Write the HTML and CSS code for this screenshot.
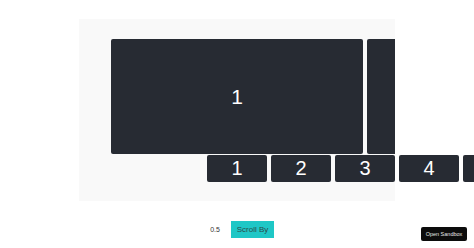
FILE: index.html
```html
<!DOCTYPE html>
<html>
<head>
<meta charset="utf-8">
<link rel="stylesheet" href="styles.css">
</head>
<body>
<div class="stage">
  <div class="viewport">
    <div class="track">
      <div class="slide">1</div>
      <div class="slide">2</div>
      <div class="slide">3</div>
    </div>
  </div>
  <div class="thumbs">
    <div class="thumb">1</div>
    <div class="thumb">2</div>
    <div class="thumb">3</div>
    <div class="thumb">4</div>
    <div class="thumb">5</div>
  </div>
</div>
<div class="controls">
  <input class="amount" type="text" value="0.5">
  <button class="scroll-btn">Scroll By</button>
</div>
<button class="sandbox">Open Sandbox</button>
</body>
</html>
```
FILE: styles.css
```css
html, body {
  margin: 0;
  padding: 0;
  background: #fff;
  font-family: "Liberation Sans", Arial, sans-serif;
  overflow: hidden;
  width: 474px;
  height: 248px;
}
.stage {
  margin: 19px 0 0 79px;
  width: 316px;
  height: 182px;
  box-sizing: border-box;
  padding: 20px 0 0 32px;
  background: #f9f9f9;
}
.viewport {
  width: 284px;
  overflow: hidden;
}
.track {
  display: flex;
  gap: 4px;
}
.slide {
  flex: 0 0 252px;
  height: 115px;
  background: #272b33;
  border-radius: 2px;
  color: #fff;
  font-size: 21px;
  display: flex;
  align-items: center;
  justify-content: center;
}
.thumbs {
  display: flex;
  gap: 4px;
  margin: 1px 0 0 96px;
  width: 400px;
}
.thumb {
  flex: 0 0 60px;
  height: 27px;
  background: #272b33;
  border-radius: 2px;
  color: #fff;
  font-size: 20px;
  display: flex;
  align-items: center;
  justify-content: center;
}
.controls {
  display: flex;
  margin: 20px 0 0 199px;
  height: 17px;
}
.amount {
  width: 32px;
  height: 17px;
  box-sizing: border-box;
  border: none;
  background: #fff;
  text-align: center;
  font-family: "Liberation Sans", Arial, sans-serif;
  font-size: 7px;
  color: #333;
  padding: 0;
  outline: none;
}
.scroll-btn {
  width: 43px;
  height: 17px;
  border: none;
  padding: 0;
  background: #1fc7c6;
  color: #2a4a4a;
  font-family: "Liberation Sans", Arial, sans-serif;
  font-size: 8px;
}
.sandbox {
  position: absolute;
  left: 421px;
  top: 227px;
  width: 46px;
  height: 14px;
  border: none;
  border-radius: 2px;
  padding: 0;
  background: #0c0c0c;
  color: #e8e8e8;
  font-family: "Liberation Sans", Arial, sans-serif;
  font-size: 5.5px;
}
```
